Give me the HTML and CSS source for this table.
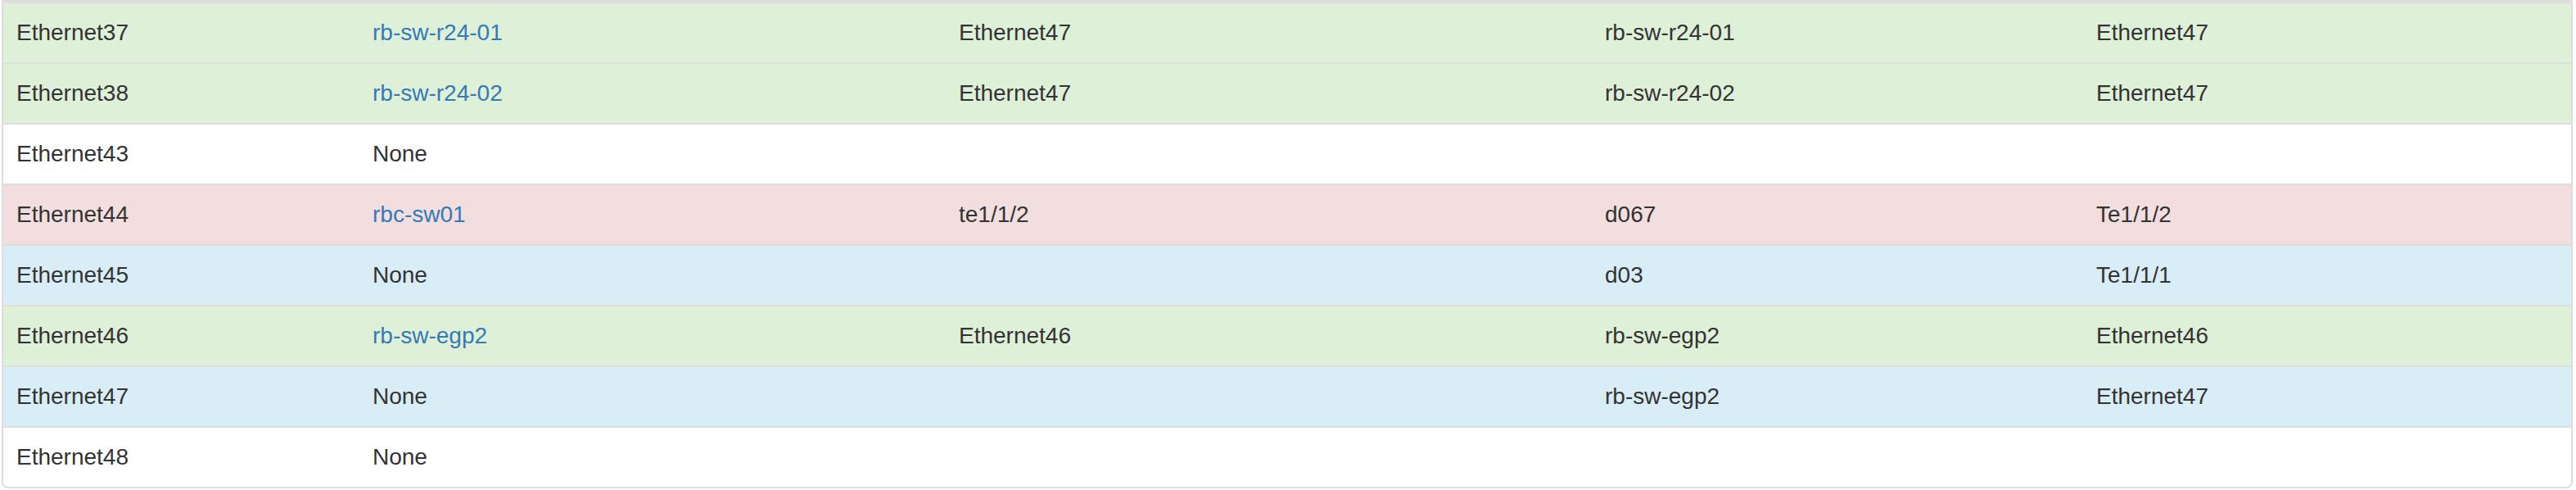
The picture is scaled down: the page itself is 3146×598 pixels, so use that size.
FILE: index.html
```html
<!DOCTYPE html>
<html>
<head>
<meta charset="utf-8">
<link rel="stylesheet" href="styles.css">
</head>
<body>
<div class="panel">
  <table class="ports">
    <colgroup>
      <col class="c1"><col class="c2"><col class="c3"><col class="c4"><col class="c5">
    </colgroup>
    <tbody>
      <tr class="success"><td>Ethernet37</td><td><a href="#">rb-sw-r24-01</a></td><td>Ethernet47</td><td>rb-sw-r24-01</td><td>Ethernet47</td></tr>
      <tr class="success"><td>Ethernet38</td><td><a href="#">rb-sw-r24-02</a></td><td>Ethernet47</td><td>rb-sw-r24-02</td><td>Ethernet47</td></tr>
      <tr><td>Ethernet43</td><td>None</td><td></td><td></td><td></td></tr>
      <tr class="danger"><td>Ethernet44</td><td><a href="#">rbc-sw01</a></td><td>te1/1/2</td><td>d067</td><td>Te1/1/2</td></tr>
      <tr class="info"><td>Ethernet45</td><td>None</td><td></td><td>d03</td><td>Te1/1/1</td></tr>
      <tr class="success"><td>Ethernet46</td><td><a href="#">rb-sw-egp2</a></td><td>Ethernet46</td><td>rb-sw-egp2</td><td>Ethernet46</td></tr>
      <tr class="info"><td>Ethernet47</td><td>None</td><td></td><td>rb-sw-egp2</td><td>Ethernet47</td></tr>
      <tr><td>Ethernet48</td><td>None</td><td></td><td></td><td></td></tr>
    </tbody>
  </table>
</div>
</body>
</html>
```

FILE: styles.css
```css
html, body {
  margin: 0;
  padding: 0;
  background: #fff;
}
body {
  font-family: "Liberation Sans", Arial, Helvetica, sans-serif;
  font-size: 28px;
  line-height: 40px;
  color: #333;
}
.panel {
  margin: 0 4px 2px 2px;
  border: 2px solid #ddd;
  border-radius: 0 0 8px 8px;
  overflow: hidden;
  background: #fff;
}
.ports {
  width: 100%;
  border-collapse: collapse;
  border-spacing: 0;
  table-layout: fixed;
}
.c1 { width: 435px; }
.c2 { width: 716px; }
.c3 { width: 789px; }
.c4 { width: 600px; }
.ports td {
  padding: 16px;
  border-top: 2px solid #ddd;
  vertical-align: top;
  white-space: nowrap;
  height: 40px;
}
.ports tr.success td { background: #dff0d8; }
.ports tr.danger td { background: #f2dede; }
.ports tr.info td { background: #d9edf7; }
.ports a {
  color: #337ab7;
  text-decoration: none;
}
```
